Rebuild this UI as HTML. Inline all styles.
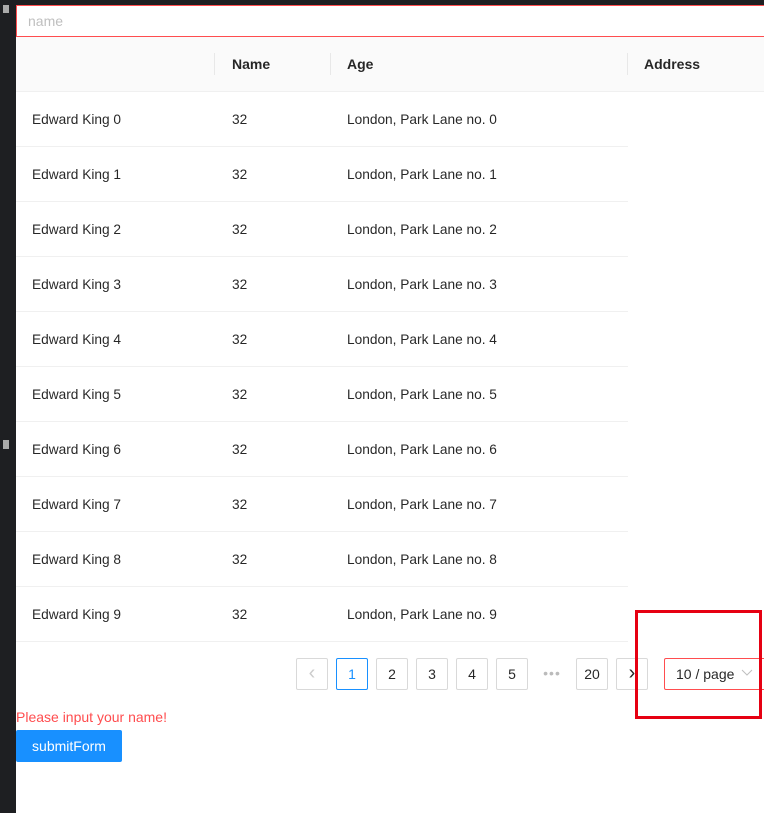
<!DOCTYPE html>
<html><head><style>
*{box-sizing:border-box;margin:0;padding:0}
body{width:764px;height:813px;background:#fff;position:relative;overflow:hidden;font-family:"Liberation Sans",sans-serif;font-size:14px;color:rgba(0,0,0,.85)}
.a{position:absolute}
.row{position:absolute;left:16px;width:612px;height:55px;border-bottom:1px solid #f0f0f0;font-size:13.7px}
.row span{position:absolute;top:19px;line-height:17px}
.pg{position:absolute;top:658px;width:32px;height:32px;border:1px solid #d9d9d9;border-radius:2px;text-align:center;line-height:30px;font-size:14px}
</style></head><body>
<div class="a" style="left:0;top:0;width:16px;height:813px;background:#1e1f22"></div>
<div class="a" style="left:0;top:0;width:764px;height:5px;background:#1e1f22"></div>
<div class="a" style="left:3px;top:5px;width:6px;height:8px;background:#aaa"></div>
<div class="a" style="left:3px;top:440px;width:6px;height:9px;background:#aaa"></div>
<div class="a" style="left:16px;top:5px;width:760px;height:32px;border:1px solid #ff4d4f;"></div>
<div class="a" style="left:28px;top:13px;color:#bfbfbf;font-size:14px">name</div>
<div class="a" style="left:16px;top:37px;width:748px;height:55px;background:#fafafa;border-bottom:1px solid #f0f0f0"></div>
<div class="a" style="left:214px;top:53px;width:1px;height:22px;background:#e8e8e8"></div>
<div class="a" style="left:330px;top:53px;width:1px;height:22px;background:#e8e8e8"></div>
<div class="a" style="left:627px;top:53px;width:1px;height:22px;background:#e8e8e8"></div>
<div class="a" style="left:232px;top:56px;font-weight:bold">Name</div>
<div class="a" style="left:347px;top:56px;font-weight:bold">Age</div>
<div class="a" style="left:644px;top:56px;font-weight:bold">Address</div>
<div class="row" style="top:92px"><span style="left:16px">Edward King 0</span><span style="left:216px">32</span><span style="left:331px">London, Park Lane no. 0</span></div>
<div class="row" style="top:147px"><span style="left:16px">Edward King 1</span><span style="left:216px">32</span><span style="left:331px">London, Park Lane no. 1</span></div>
<div class="row" style="top:202px"><span style="left:16px">Edward King 2</span><span style="left:216px">32</span><span style="left:331px">London, Park Lane no. 2</span></div>
<div class="row" style="top:257px"><span style="left:16px">Edward King 3</span><span style="left:216px">32</span><span style="left:331px">London, Park Lane no. 3</span></div>
<div class="row" style="top:312px"><span style="left:16px">Edward King 4</span><span style="left:216px">32</span><span style="left:331px">London, Park Lane no. 4</span></div>
<div class="row" style="top:367px"><span style="left:16px">Edward King 5</span><span style="left:216px">32</span><span style="left:331px">London, Park Lane no. 5</span></div>
<div class="row" style="top:422px"><span style="left:16px">Edward King 6</span><span style="left:216px">32</span><span style="left:331px">London, Park Lane no. 6</span></div>
<div class="row" style="top:477px"><span style="left:16px">Edward King 7</span><span style="left:216px">32</span><span style="left:331px">London, Park Lane no. 7</span></div>
<div class="row" style="top:532px"><span style="left:16px">Edward King 8</span><span style="left:216px">32</span><span style="left:331px">London, Park Lane no. 8</span></div>
<div class="row" style="top:587px"><span style="left:16px">Edward King 9</span><span style="left:216px">32</span><span style="left:331px">London, Park Lane no. 9</span></div>
<div class="pg" style="left:296px;color:#ccc;font-size:20px;line-height:28px">&lsaquo;</div>
<div class="pg" style="left:336px;border-color:#1890ff;color:#1890ff">1</div>
<div class="pg" style="left:376px">2</div>
<div class="pg" style="left:416px">3</div>
<div class="pg" style="left:456px">4</div>
<div class="pg" style="left:496px">5</div>
<div class="a" style="left:536px;top:665px;width:32px;text-align:center;color:#bbb;letter-spacing:1px">•••</div>
<div class="pg" style="left:576px">20</div>
<div class="pg" style="left:616px;font-size:20px;line-height:28px">&rsaquo;</div>
<div class="a" style="left:664px;top:658px;width:110px;height:32px;border:1px solid #ff4d4f;border-radius:2px"></div>
<div class="a" style="left:676px;top:666px">10 / page</div>
<svg class="a" style="left:741px;top:669px" width="12" height="8"><path d="M1 1L6 6L11 1" fill="none" stroke="#bfbfbf" stroke-width="1"/></svg>
<div class="a" style="left:635px;top:610px;width:127px;height:109px;border:3px solid #e60012"></div>
<div class="a" style="left:16px;top:709px;color:#ff4d4f;font-size:14px">Please input your name!</div>
<div class="a" style="left:16px;top:730px;width:106px;height:32px;background:#1890ff;border-radius:2px;color:#fff;text-align:center;line-height:32px">submitForm</div>
</body></html>
